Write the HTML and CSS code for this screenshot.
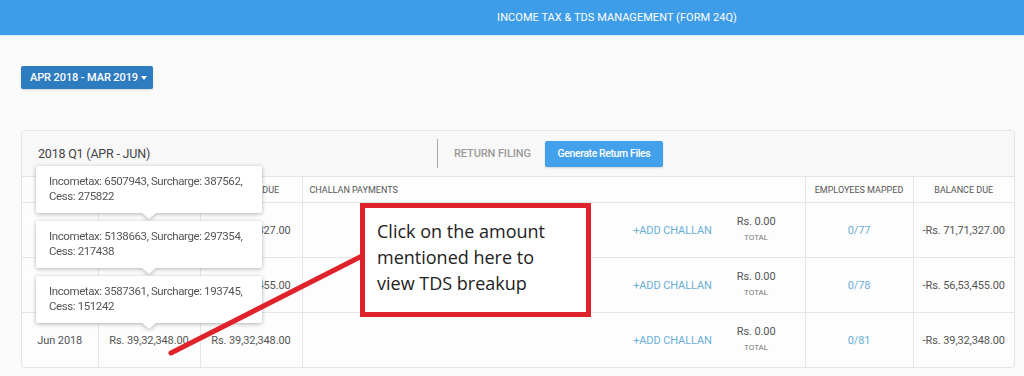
FILE: index.html
```html
<!DOCTYPE html>
<html>
<head>
    <title>Income Tax &amp; TDS Management (Form 24Q)</title>
    <link rel="stylesheet" href="styles.css">
</head>
<body>
    <div id="topBar">INCOME TAX &amp; TDS MANAGEMENT (FORM 24Q)</div>

    <div id="yearBar">
        <button class="yearButton">APR 2018 - MAR 2019 <span class="caret"></span></button>
    </div>

    <div id="quarterCard">
        <div class="cardHead">
            <div class="quarterTitle">2018 Q1 (APR - JUN)</div>
            <div class="divider"></div>
            <div class="filingLabel">RETURN FILING</div>
            <button class="genButton">Generate Return Files</button>
        </div>
        <table class="tdsTable">
            <colgroup>
                <col style="width: 76px">
                <col style="width: 102px">
                <col style="width: 102px">
                <col style="width: 503px">
                <col style="width: 108px">
                <col>
            </colgroup>
            <tr>
                <th>MONTH</th>
                <th>TDS DEDUCTED</th>
                <th>AMOUNT DUE</th>
                <th class="left">CHALLAN PAYMENTS</th>
                <th>EMPLOYEES MAPPED</th>
                <th>BALANCE DUE</th>
            </tr>
            <tr>
                <td>Apr 2018</td>
                <td><span class="amount">Rs. 71,71,327.00
                    <span class="tip">Incometax: 6507943, Surcharge: 387562, Cess: 275822</span></span></td>
                <td>Rs. 71,71,327.00</td>
                <td><div class="challan"><a class="link">+ADD CHALLAN</a><div class="total">Rs. 0.00<small>TOTAL</small></div></div></td>
                <td><a class="link">0/77</a></td>
                <td>-Rs. 71,71,327.00</td>
            </tr>
            <tr>
                <td>May 2018</td>
                <td><span class="amount">Rs. 56,53,455.00
                    <span class="tip">Incometax: 5138663, Surcharge: 297354, Cess: 217438</span></span></td>
                <td>Rs. 56,53,455.00</td>
                <td><div class="challan"><a class="link">+ADD CHALLAN</a><div class="total">Rs. 0.00<small>TOTAL</small></div></div></td>
                <td><a class="link">0/78</a></td>
                <td>-Rs. 56,53,455.00</td>
            </tr>
            <tr>
                <td>Jun 2018</td>
                <td><span class="amount">Rs. 39,32,348.00
                    <span class="tip">Incometax: 3587361, Surcharge: 193745, Cess: 151242</span></span></td>
                <td>Rs. 39,32,348.00</td>
                <td><div class="challan"><a class="link">+ADD CHALLAN</a><div class="total">Rs. 0.00<small>TOTAL</small></div></div></td>
                <td><a class="link">0/81</a></td>
                <td>-Rs. 39,32,348.00</td>
            </tr>
        </table>
    </div>

    <!-- annotation drawn over the screenshot -->
    <svg id="pointer" width="1024" height="376">
        <line x1="171" y1="353" x2="362" y2="256" stroke="#e0232b" stroke-width="5" stroke-linecap="round"/>
    </svg>
    <div id="note">Click on the amount mentioned here to view TDS breakup</div>
</body>
</html>
```

FILE: styles.css
```css
body {
    font-family: Roboto, "Open Sans", Arial, sans-serif;
    background-color: #fafafa;
    margin: 0;
    color: #555;
    position: relative;
    min-height: 376px;
}

#topBar {
    height: 35px;
    line-height: 35px;
    background-color: #3d9de9;
    border-bottom: 1px solid #d6ecfb;
    color: #fff;
    font-size: 11px;
    letter-spacing: 0.05px;
    padding-left: 210px;
    text-align: center;
}

#yearBar {
    padding: 30px 0 0 21px;
}

.yearButton {
    font-family: inherit;
    height: 23px;
    width: 132px;
    padding: 0 0 0 9px;
    text-align: left;
    border: none;
    border-radius: 2px;
    background-color: #2e7cc0;
    color: #fff;
    font-size: 11px;
    font-weight: 500;
    letter-spacing: -0.1px;
    white-space: nowrap;
    box-shadow: 0 1px 2px rgba(0, 0, 0, 0.15);
}

.caret {
    display: inline-block;
    vertical-align: middle;
    border-top: 4px solid #fff;
    border-left: 3px solid transparent;
    border-right: 3px solid transparent;
}

#quarterCard {
    margin: 41px 9px 0 21px;
    border: 1px solid #e4e4e4;
    border-radius: 4px;
    background-color: #fdfdfd;
}

.cardHead {
    height: 45px;
    display: flex;
    align-items: center;
    background-color: #f8f8f8;
    border-bottom: 1px solid #e4e4e4;
    border-radius: 4px 4px 0 0;
}

.quarterTitle {
    width: 399px;
    padding-left: 16px;
    font-size: 12.5px;
    letter-spacing: -0.2px;
    color: #444;
}

.divider {
    width: 1px;
    height: 29px;
    background-color: #aaa;
}

.filingLabel {
    margin-left: 16px;
    font-size: 11px;
    font-weight: 500;
    letter-spacing: -0.1px;
    color: #9a9a9a;
}

.genButton {
    font-family: inherit;
    margin-left: 14px;
    height: 26px;
    width: 118px;
    border: none;
    border-radius: 2px;
    background-color: #42a1ea;
    color: #fff;
    font-size: 10.5px;
    font-weight: 500;
    letter-spacing: -0.4px;
    box-shadow: 0 1px 2px rgba(0, 0, 0, 0.15);
}

.tdsTable {
    width: 100%;
    border-collapse: collapse;
    table-layout: fixed;
}

.tdsTable th {
    height: 23px;
    font-size: 9px;
    font-weight: normal;
    color: #555;
    text-align: center;
    border-left: 1px solid #e6e6e6;
    border-bottom: 1px solid #e6e6e6;
    background-color: #fdfdfd;
    white-space: nowrap;
}

.tdsTable th.left {
    text-align: left;
    padding-left: 7px;
}

.tdsTable td {
    height: 54px;
    padding: 0;
    font-size: 11px;
    letter-spacing: -0.1px;
    text-align: center;
    border-left: 1px solid #e6e6e6;
    border-top: 1px solid #e6e6e6;
    white-space: nowrap;
}

.tdsTable th:first-child,
.tdsTable td:first-child {
    border-left: none;
}

.link {
    color: #6aaed6;
}

.challan {
    display: flex;
    justify-content: flex-end;
    align-items: center;
    gap: 25px;
    padding-right: 29px;
}

.total {
    text-align: center;
    line-height: 14px;
}

.total small {
    display: block;
    font-size: 8px;
    letter-spacing: 0;
    color: #777;
    margin-top: 2px;
}

.amount {
    position: relative;
    display: inline-block;
    line-height: 13px;
}

.tip {
    position: absolute;
    bottom: calc(100% + 11px);
    left: 50%;
    transform: translateX(-50%);
    width: 226px;
    box-sizing: border-box;
    padding: 8px 12px 9px 13px;
    background-color: #fff;
    border-radius: 2px;
    font-size: 11.5px;
    line-height: 15px;
    letter-spacing: -0.4px;
    color: #555;
    text-align: left;
    white-space: normal;
    filter: drop-shadow(0 1px 2px rgba(0, 0, 0, 0.3));
    z-index: 2;
}

.tip::after {
    content: "";
    position: absolute;
    top: 100%;
    left: 50%;
    margin-left: -7px;
    border-top: 6px solid #fff;
    border-left: 7px solid transparent;
    border-right: 7px solid transparent;
}

#pointer {
    position: absolute;
    top: 0;
    left: 0;
    z-index: 5;
    pointer-events: none;
}

#note {
    position: absolute;
    left: 360px;
    top: 203px;
    width: 231px;
    height: 114px;
    box-sizing: border-box;
    border: 5px solid #e0232b;
    background-color: #fff;
    padding: 10px 12px;
    font-family: "Open Sans", Arial, sans-serif;
    font-size: 18px;
    line-height: 26px;
    color: #222;
    z-index: 6;
}
```
